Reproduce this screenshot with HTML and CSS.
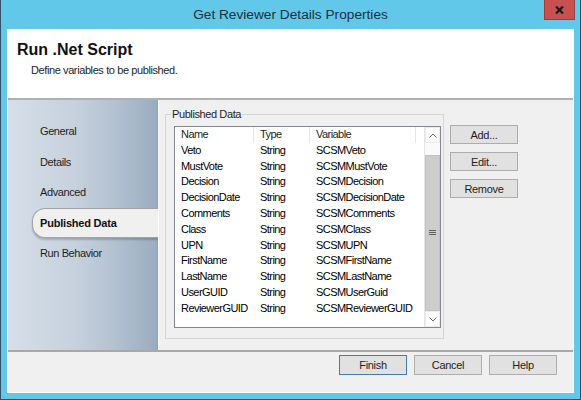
FILE: index.html
```html
<!DOCTYPE html>
<html>
<head>
<meta charset="utf-8">
<link rel="stylesheet" href="styles.css">
</head>
<body>
<div class="window">
  <div class="titlebar">
    <div class="title">Get Reviewer Details Properties</div>
    <div class="close">
      <svg width="9" height="8" viewBox="0 0 9 8"><path d="M1 0.5 L8 7.5 M8 0.5 L1 7.5" stroke="#1a1a1a" stroke-width="2.2" fill="none"/></svg>
    </div>
  </div>
  <div class="client">
    <div class="header">
      <div class="h-title">Run .Net Script</div>
      <div class="h-sub">Define variables to be published.</div>
    </div>
    <div class="main">
      <nav class="sidebar">
        <div class="nav-item">General</div>
        <div class="nav-item">Details</div>
        <div class="nav-item">Advanced</div>
        <div class="nav-item active">Published Data</div>
        <div class="nav-item">Run Behavior</div>
      </nav>
      <div class="content">
        <div class="group">
          <div class="group-label">Published Data</div>
          <div class="listbox">
            <div class="list">
              <div class="row head"><span>Name</span><span>Type</span><span>Variable</span></div>
              <div class="row"><span>Veto</span><span>String</span><span>SCSMVeto</span></div>
              <div class="row"><span>MustVote</span><span>String</span><span>SCSMMustVote</span></div>
              <div class="row"><span>Decision</span><span>String</span><span>SCSMDecision</span></div>
              <div class="row"><span>DecisionDate</span><span>String</span><span>SCSMDecisionDate</span></div>
              <div class="row"><span>Comments</span><span>String</span><span>SCSMComments</span></div>
              <div class="row"><span>Class</span><span>String</span><span>SCSMClass</span></div>
              <div class="row"><span>UPN</span><span>String</span><span>SCSMUPN</span></div>
              <div class="row"><span>FirstName</span><span>String</span><span>SCSMFirstName</span></div>
              <div class="row"><span>LastName</span><span>String</span><span>SCSMLastName</span></div>
              <div class="row"><span>UserGUID</span><span>String</span><span>SCSMUserGuid</span></div>
              <div class="row"><span>ReviewerGUID</span><span>String</span><span>SCSMReviewerGUID</span></div>
            </div>
            <div class="scrollbar">
              <div class="sb-btn">
                <svg width="8" height="5" viewBox="0 0 8 5"><path d="M0.5 4.5 L4 1 L7.5 4.5" stroke="#707070" stroke-width="1" fill="none"/></svg>
              </div>
              <div class="sb-track">
                <div class="sb-thumb">
                  <svg width="7" height="6" viewBox="0 0 7 6"><path d="M0 0.5 H7 M0 2.5 H7 M0 4.5 H7" stroke="#606060" stroke-width="1"/></svg>
                </div>
              </div>
              <div class="sb-btn">
                <svg width="8" height="5" viewBox="0 0 8 5"><path d="M0.5 0.5 L4 4 L7.5 0.5" stroke="#707070" stroke-width="1" fill="none"/></svg>
              </div>
            </div>
          </div>
        </div>
        <div class="side-buttons">
          <div class="btn">Add...</div>
          <div class="btn">Edit...</div>
          <div class="btn">Remove</div>
        </div>
      </div>
    </div>
    <div class="footer">
      <div class="btn big default">Finish</div>
      <div class="btn big">Cancel</div>
      <div class="btn big">Help</div>
    </div>
  </div>
</div>
</body>
</html>
```

FILE: styles.css
```css
* { box-sizing: border-box; }
body {
  margin: 0;
  font-family: "Liberation Sans", Arial, sans-serif;
  font-size: 11px;
  color: #000;
}
.window {
  width: 581px;
  height: 400px;
  background: #62c8ea;
  border: 1px solid #2f5266;
  border-top: none;
  display: flex;
  flex-direction: column;
}
.titlebar {
  height: 29px;
  flex: none;
  display: grid;
  grid-template-columns: 1fr auto 1fr;
  align-items: start;
}
.title {
  grid-column: 2;
  font-size: 13.7px;
  line-height: 29px;
  color: #1f2f3d;
}
.close {
  grid-column: 3;
  justify-self: end;
  width: 31px;
  height: 20px;
  margin-right: 5px;
  background: #c75050;
  border: 1px solid #9d3c3a;
  border-top: none;
  display: flex;
  align-items: center;
  justify-content: center;
}
.client {
  flex: 1;
  margin: 0 6px 6px 6px;
  border: 1px solid #fff;
  background: #f0f0f0;
  display: flex;
  flex-direction: column;
}
.header {
  height: 70px;
  flex: none;
  background: #fff;
  border-bottom: 2px solid #b0b0b0;
  padding: 10px 0 0 9px;
}
.h-title {
  font-size: 16px;
  font-weight: bold;
  line-height: 19px;
  color: #111;
}
.h-sub {
  margin: 5px 0 0 14px;
  line-height: 13px;
  letter-spacing: -0.4px;
  color: #1e1e1e;
}
.main {
  height: 250px;
  flex: none;
  display: flex;
}
.sidebar {
  width: 150px;
  flex: none;
  background: linear-gradient(to right, #d6dfe9 0%, #c6d1dd 45%, #b3c1d0 72%, #9aacc1 100%);
  border-right: 1px solid #8fa1b5;
  padding-top: 16px;
}
.nav-item {
  height: 30.5px;
  line-height: 30.5px;
  padding-left: 32px;
  color: #1e1e1e;
  letter-spacing: -0.4px;
}
.nav-item.active {
  margin-left: 24px;
  margin-right: -1px;
  padding-left: 7px;
  background: #f0f0f0;
  border: 1px solid #a4a4a4;
  border-right: none;
  border-radius: 13px 0 0 13px;
  box-shadow: 0 2px 2px rgba(0, 0, 0, 0.2);
  line-height: 28.5px;
  font-weight: bold;
  letter-spacing: -0.2px;
  color: #111;
}
.content {
  flex: 1;
  border-left: 1px solid #fff;
  display: flex;
  align-items: flex-start;
  gap: 6px;
  padding: 14px 0 0 6px;
}
.group {
  position: relative;
  width: 279px;
  height: 225px;
  border: 1px solid #d5d5d5;
  padding: 11px 2px 0 8px;
}
.group-label {
  position: absolute;
  top: -7px;
  left: 5px;
  padding: 0 1px;
  line-height: 13px;
  background: #f0f0f0;
  letter-spacing: -0.4px;
  color: #1e1e1e;
}
.listbox {
  width: 267px;
  height: 202px;
  border: 1px solid #828790;
  background: #fff;
  display: flex;
}
.list {
  flex: 1;
}
.row {
  display: flex;
  height: 15.8px;
  line-height: 15.8px;
  letter-spacing: -0.55px;
  white-space: nowrap;
}
.row span {
  padding-left: 6px;
  overflow: hidden;
}
.row span:nth-child(1) { width: 79px; }
.row span:nth-child(2) { width: 56px; }
.row span:nth-child(3) { width: 106px; }
.head span {
  border-right: 1px solid #e5e5e5;
  color: #1e1e1e;
}
.scrollbar {
  width: 16px;
  flex: none;
  display: flex;
  flex-direction: column;
  background: #fafafa;
  border-left: 1px solid #e4e4e4;
}
.sb-btn {
  height: 16px;
  flex: none;
  display: flex;
  align-items: center;
  justify-content: center;
  background: #fdfdfd;
  border: 1px solid #ececec;
}
.sb-track {
  flex: 1;
  display: flex;
  flex-direction: column;
  padding-top: 12px;
}
.sb-thumb {
  flex: 1;
  background: #cdcdcd;
  border: 1px solid #c2c2c2;
  display: flex;
  align-items: center;
  justify-content: center;
}
.side-buttons {
  display: flex;
  flex-direction: column;
  gap: 8px;
  margin-top: 11px;
}
.btn {
  width: 68px;
  height: 19px;
  background: #e1e1e1;
  border: 1px solid #adadad;
  display: flex;
  align-items: center;
  justify-content: center;
  letter-spacing: -0.3px;
  color: #1e1e1e;
}
.btn.big {
  height: 20px;
}
.btn.default {
  border-color: #3c7fb1;
}
.footer {
  flex: 1;
  border-top: 2px solid #a8a8a8;
  display: flex;
  justify-content: flex-end;
  align-items: flex-start;
  gap: 7px;
  padding: 3px 16px 0 0;
}
```
